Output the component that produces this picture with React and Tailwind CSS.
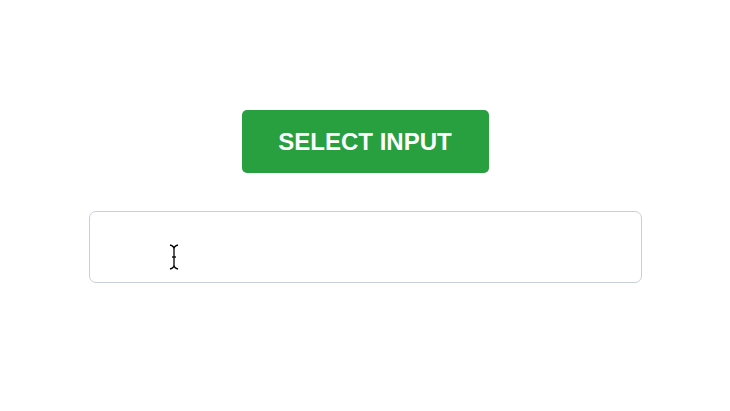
export default function App() {
  return (
    <div className="w-[730px] h-[411px] bg-white flex flex-col items-center pt-[110px]" style={{ fontFamily: "'Liberation Sans', Arial, sans-serif" }}>
      <button className="w-[247px] h-[63px] rounded-[5px] bg-[#28a040] text-white text-[24px] font-bold">
        SELECT INPUT
      </button>
      <div className="relative mt-[38px] ml-[1px] w-[553px] h-[72px] rounded-[7px] border border-[#c9ced8] bg-white">
        <svg className="absolute left-[77px] top-[31px]" width="14" height="28" viewBox="0 0 14 28" fill="none">
          <path d="M3 2 Q7 3 7 6 Q7 3 11 2" stroke="#000" strokeWidth="1.3" />
          <path d="M7 6 V22" stroke="#000" strokeWidth="1.3" />
          <path d="M5 14 H9" stroke="#000" strokeWidth="1.3" />
          <path d="M3 26 Q7 25 7 22 Q7 25 11 26" stroke="#000" strokeWidth="1.3" />
        </svg>
      </div>
    </div>
  );
}
